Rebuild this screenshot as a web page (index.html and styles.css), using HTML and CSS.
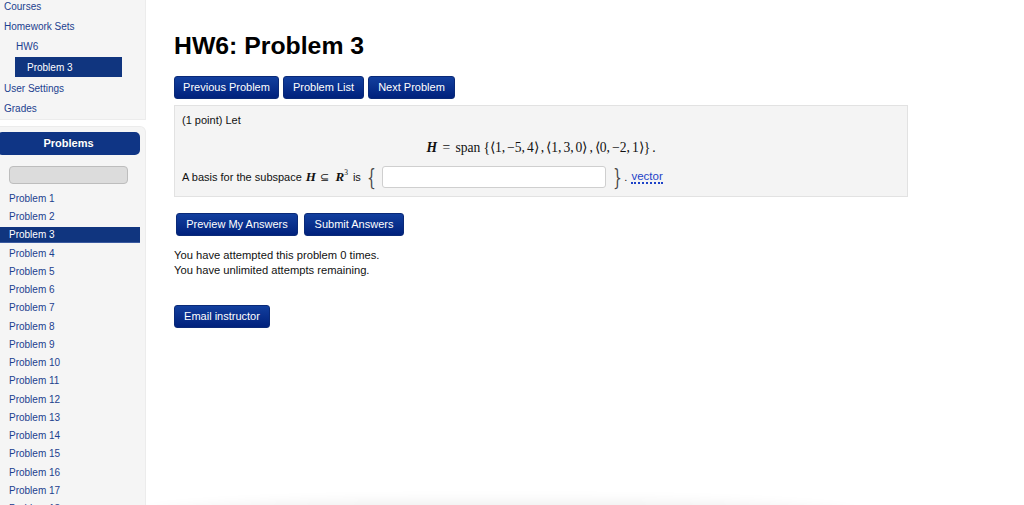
FILE: index.html
```html
<!DOCTYPE html>
<html>
<head>
<meta charset="utf-8">
<link rel="stylesheet" href="styles.css">
</head>
<body>
<div class="page">
  <aside class="sidebar">
    <nav class="site-nav">
      <a class="nav-item">Courses</a>
      <a class="nav-item">Homework Sets</a>
      <a class="nav-item sub">HW6</a>
      <a class="nav-item sub2 active">Problem 3</a>
      <a class="nav-item">User Settings</a>
      <a class="nav-item">Grades</a>
    </nav>
    <div class="problems-panel">
      <div class="problems-head">Problems</div>
      <div class="search-bar"></div>
      <ul class="problem-list">
        <li>Problem 1</li>
        <li>Problem 2</li>
        <li class="current">Problem 3</li>
        <li>Problem 4</li>
        <li>Problem 5</li>
        <li>Problem 6</li>
        <li>Problem 7</li>
        <li>Problem 8</li>
        <li>Problem 9</li>
        <li>Problem 10</li>
        <li>Problem 11</li>
        <li>Problem 12</li>
        <li>Problem 13</li>
        <li>Problem 14</li>
        <li>Problem 15</li>
        <li>Problem 16</li>
        <li>Problem 17</li>
        <li>Problem 18</li>
      </ul>
    </div>
  </aside>
  <main class="main">
    <h1 class="title">HW6: Problem 3</h1>
    <div class="nav-buttons">
      <button class="btn btn-prev">Previous Problem</button>
      <button class="btn btn-list">Problem List</button>
      <button class="btn btn-next">Next Problem</button>
    </div>
    <div class="problem-box">
      <p class="intro">(1 point) Let</p>
      <div class="math-display"><span class="mi">H</span> <span class="mo">=</span> span<span class="sp"></span>{⟨1,<span class="th"></span>−5,<span class="th"></span>4⟩<span class="th"></span>,<span class="th"></span>⟨1,<span class="th"></span>3,<span class="th"></span>0⟩<span class="th"></span>,<span class="th"></span>⟨0,<span class="th"></span>−2,<span class="th"></span>1⟩}<span class="th"></span>.</div>
      <div class="basis-line">
        <span>A basis for the subspace</span>
        <span class="math"><span class="mi">H</span> <span class="mo-small">⊆</span> <span class="mi">R</span><sup class="sup">3</sup></span>
        <span>is</span>
        <span class="brace">{</span>
        <span class="answer"></span>
        <span class="brace close">}</span><span class="dot">.</span>
        <a class="vector">vector</a>
      </div>
    </div>
    <div class="submit-buttons">
      <button class="btn btn-preview">Preview My Answers</button>
      <button class="btn btn-submit">Submit Answers</button>
    </div>
    <p class="attempts">You have attempted this problem 0 times.<br>You have unlimited attempts remaining.</p>
    <button class="btn email">Email instructor</button>
  </main>
</div>
<div class="bottom-shadow"></div>
</body>
</html>
```
FILE: styles.css
```css
html, body {
  margin: 0;
  padding: 0;
  overflow: hidden;
  background: #ffffff;
  height: 505px;
}
body {
  font-family: "Liberation Sans", Arial, sans-serif;
  color: #111;
  position: relative;
}
.page {
  display: flex;
  align-items: flex-start;
}
.sidebar {
  width: 146px;
  flex: none;
  display: flex;
  flex-direction: column;
  gap: 6px;
}
.site-nav {
  background: #f5f5f5;
  border-right: 1px solid #ececec;
  border-bottom: 1px solid #ececec;
  width: 145px;
  margin-top: -4px;
  padding-bottom: 1px;
  display: flex;
  flex-direction: column;
}
.nav-item {
  display: block;
  height: 20px;
  line-height: 21px;
  font-size: 10px;
  color: #1c3f8f;
  padding-left: 4px;
}
.nav-item.sub { padding-left: 16px; }
.nav-item.sub2 {
  margin: 1px 23px 1px 15px;
  padding-left: 12px;
}
.nav-item.active {
  background: #10357f;
  color: #fff;
}
.problems-panel {
  background: #f5f5f5;
  border: 1px solid #ececec;
  border-left: none;
  border-top-right-radius: 6px;
  width: 145px;
  padding-top: 5px;
  height: 400px;
}
.problems-head {
  background: #0f3585;
  color: #fff;
  font-weight: bold;
  font-size: 11px;
  text-align: center;
  height: 23px;
  line-height: 23px;
  border-radius: 5px;
  margin-left: -3px;
  width: 143px;
  text-shadow: 0 -1px 0 rgba(0,0,0,0.25);
}
.search-bar {
  margin: 11px 0 0 9px;
  width: 117px;
  height: 16px;
  background: #dcdcdc;
  border: 1px solid #bdbdbd;
  border-radius: 4px;
}
.problem-list {
  list-style: none;
  margin: 7px 0 0 0;
  padding: 0;
}
.problem-list li {
  font-size: 10px;
  color: #1c3f8f;
  height: 15.6px;
  line-height: 15.6px;
  margin-bottom: 2.65px;
  padding-left: 9px;
  width: 131px;
}
.problem-list li.current {
  background: #10357f;
  color: #fff;
  border-bottom: 1px solid #3a5aa0;
  height: 14.6px;
}
.main {
  margin-left: 28px;
  padding-top: 31px;
  display: flex;
  flex-direction: column;
  align-items: flex-start;
}
.title {
  margin: 0;
  font-size: 24.8px;
  line-height: 30px;
  font-weight: bold;
  color: #000;
}
.btn {
  font-family: "Liberation Sans", Arial, sans-serif;
  font-size: 11px;
  color: #fff;
  background: linear-gradient(#123f9e, #00217c);
  border: 1px solid #0a2a78;
  border-radius: 3px;
  height: 23px;
  padding: 0;
  line-height: 21px;
  cursor: pointer;
  text-align: center;
}
.btn-prev { width: 105px; }
.btn-list { width: 81px; }
.btn-next { width: 87px; }
.btn-preview { width: 122px; }
.btn-submit { width: 100px; }
.email { width: 96px; }
.nav-buttons {
  display: flex;
  gap: 4px;
  margin-top: 15px;
}
.problem-box {
  margin-top: 6px;
  width: 718px;
  background: #f4f4f4;
  border: 1px solid #e2e2e2;
  padding: 6px 7px 8px 7px;
  font-size: 11px;
}
.intro {
  margin: 0;
  line-height: 15px;
  padding-top: 1px;
}
.math-display {
  margin-top: 10px;
  text-align: center;
  font-family: "Liberation Serif", "Times New Roman", serif;
  font-size: 13.6px;
  line-height: 20px;
  color: #111;
}
.mi {
  font-style: italic;
  font-weight: bold;
  font-family: "Liberation Serif", "Times New Roman", serif;
}
.mo { padding: 0 2px; }
.sp { display: inline-block; width: 3px; }
.th { display: inline-block; width: 2px; }
.basis-line {
  margin-top: 8px;
  display: flex;
  align-items: center;
  height: 22px;
  gap: 4px;
  font-size: 11px;
}
.math {
  font-family: "Liberation Serif", "Times New Roman", serif;
  font-size: 13px;
  padding: 0 1px 0 0;
}
.mo-small { font-size: 11px; padding: 0 3px 0 1px; }
.sup { font-size: 7.5px; vertical-align: 6px; line-height: 0; }
.brace {
  font-family: "DejaVu Serif", "Liberation Serif", serif;
  font-size: 20px;
  font-weight: 300;
  color: #444;
  line-height: 22px;
  display: inline-block;
  transform: scaleX(0.7) scaleY(1.1);
}
.brace.close { margin-left: 1px; }
.answer {
  display: block;
  width: 222px;
  height: 20px;
  background: #fff;
  border: 1px solid #cfcfcf;
  border-radius: 3px;
  margin-left: 0;
}
.dot { margin-left: -3px; }
.vector {
  color: #1e43c8;
  font-size: 11.5px;
  border-bottom: 2px dotted #1e43c8;
  line-height: 11px;
  margin-left: 0;
}
.submit-buttons {
  display: flex;
  gap: 6px;
  margin-top: 16px;
  margin-left: 2px;
}
.attempts {
  margin: 11.5px 0 0 0;
  font-size: 11.2px;
  line-height: 15px;
  color: #111;
}
.email {
  margin-top: 27.5px;
}
.bottom-shadow {
  position: absolute;
  left: 140px;
  top: 505px;
  width: 720px;
  height: 40px;
  box-shadow: 0 -3px 14px rgba(0,0,0,0.07);
  border-radius: 40%;
}
```
